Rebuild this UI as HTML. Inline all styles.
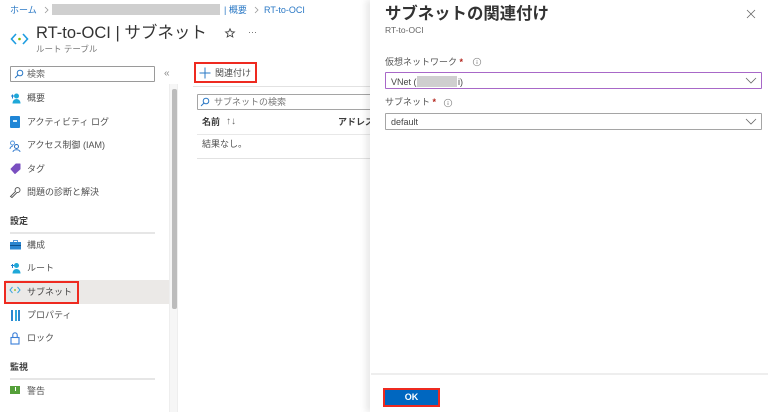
<!DOCTYPE html>
<html lang="ja"><head><meta charset="utf-8">
<style>
html,body{margin:0;padding:0;width:768px;height:412px;overflow:hidden;background:#fff}
body{position:relative;font-family:"Liberation Sans","Noto Sans CJK JP",sans-serif;color:#444;filter:blur(.35px)}
.t{position:absolute;white-space:nowrap;font-size:9px;line-height:12px;color:#505050}
.b{position:absolute;box-sizing:border-box}
svg{position:absolute;overflow:visible}
.link{color:#2a78c5}
.h{font-weight:bold;color:#3c3c3c}
</style></head><body>
<!-- breadcrumb -->
<div class="t link" style="left:10px;top:4px">ホーム</div>
<svg style="left:44px;top:6px" width="6" height="8"><path d="M1 1l3 3-3 3" fill="none" stroke="#999" stroke-width=".8"/></svg>
<div class="b" style="left:52px;top:4px;width:168px;height:11px;background:#cfcfcf"></div>
<div class="t link" style="left:224px;top:4px">| 概要</div>
<svg style="left:254px;top:6px" width="6" height="8"><path d="M1 1l3 3-3 3" fill="none" stroke="#999" stroke-width=".8"/></svg>
<div class="t link" style="left:264px;top:4px">RT-to-OCI</div>
<!-- title -->
<svg style="left:10px;top:32px" width="20" height="14"><path d="M6 2L1.500 7 6 12" fill="none" stroke="#1f9de0" stroke-width="1.600"/><path d="M13 2l4.500 5-4.500 5" fill="none" stroke="#1f9de0" stroke-width="1.600"/><circle cx="9.500" cy="7" r="1.300" fill="#7fba00"/></svg>
<div class="t" style="left:36px;top:22px;font-size:16.500px;line-height:22px;color:#333">RT-to-OCI | サブネット</div>
<div class="t" style="left:36px;top:43px;font-size:8.500px;color:#777">ルート テーブル</div>
<svg style="left:225px;top:28px" width="10" height="10"><path d="M5 .8l1.300 2.900 3.100.3-2.400 2 .8 3L5 7.400 2.200 9l.8-3-2.400-2 3.100-.3z" fill="none" stroke="#444" stroke-width=".9"/></svg>
<div class="t" style="left:248px;top:26px;font-size:9px;line-height:12px;color:#666">···</div>
<!-- sidebar search -->
<div class="b" style="left:10px;top:66px;width:145px;height:16px;border:1px solid #9a9a9a;border-radius:1px"></div>
<svg style="left:14px;top:69px" width="10" height="10"><circle cx="6" cy="4" r="2.800" fill="none" stroke="#2a78c5"/><path d="M4 6L1 9" stroke="#2a78c5"/></svg>
<div class="t" style="left:27px;top:68px;color:#666">検索</div>
<div class="t" style="left:164px;top:68px;font-size:10px;color:#888">«</div>
<!-- sidebar items -->
<svg style="left:10px;top:93px" width="13" height="11"><circle cx="6.500" cy="3" r="2.500" fill="#1fa8d8"/><path d="M2.500 10.500c0-6 8-6 8 0z" fill="#1fa8d8"/><path d="M1 3h3M2.500 1.500v4" stroke="#1f7fd0"/></svg>
<div class="t" style="left:27px;top:92px">概要</div>
<div class="b" style="left:10px;top:116px;width:10px;height:12px;background:#1f86d6;border-radius:1px"></div>
<div class="b" style="left:13px;top:120px;width:4px;height:1.500px;background:#d6eefc"></div>
<div class="t" style="left:27px;top:116px">アクティビティ ログ</div>
<svg style="left:9px;top:140px" width="12" height="13"><circle cx="3.500" cy="3" r="2" fill="none" stroke="#5a9ae0"/><circle cx="7.500" cy="6.500" r="2" fill="none" stroke="#2a6fc0"/><path d="M1 9c0-2 2-3 3-3M4 12c0-3 7-3 7 0" fill="none" stroke="#3a7fd0"/></svg>
<div class="t" style="left:27px;top:139px">アクセス制御 (IAM)</div>
<svg style="left:10px;top:163px" width="11" height="11"><path d="M1 6l5-5h4v5l-5 4.500z" fill="#7a4fc0" stroke="#7a4fc0" stroke-linejoin="round"/></svg>
<div class="t" style="left:27px;top:163px">タグ</div>
<svg style="left:9px;top:186px" width="12" height="12"><path d="M1.500 10.500l5-5a2.500 2.500 0 1 1 1.500 1l-5 5z" fill="none" stroke="#555" stroke-width=".9"/></svg>
<div class="t" style="left:27px;top:186px">問題の診断と解決</div>
<div class="t h" style="left:10px;top:215px">設定</div>
<div class="b" style="left:10px;top:232px;width:145px;height:2px;background:#e6e6e6"></div>
<svg style="left:10px;top:239px" width="11" height="11"><path d="M3.500 3V1.500h4V3" fill="none" stroke="#5a9ad8"/><rect x="0" y="3" width="11" height="7.500" fill="#2a85d0"/><rect x="0" y="6" width="11" height="1" fill="#0d4f8c"/></svg>
<div class="t" style="left:27px;top:239px">構成</div>
<svg style="left:10px;top:262px" width="13" height="12"><circle cx="6.500" cy="3.500" r="2.500" fill="#1fa8d8"/><path d="M2.500 11.500c0-6 8-6 8 0z" fill="#1fa8d8"/><path d="M1 3.500h3M2.500 2v4" stroke="#1f7fd0"/></svg>
<div class="t" style="left:27px;top:262px">ルート</div>
<div class="b" style="left:5px;top:280px;width:164px;height:24px;background:#ebe9e7"></div>
<div class="b" style="left:4px;top:281px;width:75px;height:23px;border:2px solid #ee2a20"></div>
<svg style="left:9px;top:285px" width="12" height="10"><path d="M3.500 2L1 5l2.500 3M8.500 2L11 5 8.500 8" fill="none" stroke="#3aa7e0"/><circle cx="6" cy="5" r=".9" fill="#7fba00"/></svg>
<div class="t" style="left:27px;top:286px;color:#444">サブネット</div>
<div class="b" style="left:11px;top:310px;width:2px;height:11px;background:#2a85d0"></div>
<div class="b" style="left:15px;top:310px;width:2px;height:11px;background:#32a8dc"></div>
<div class="b" style="left:18px;top:310px;width:2px;height:11px;background:#2a85d0"></div>
<div class="t" style="left:27px;top:309px">プロパティ</div>
<svg style="left:10px;top:332px" width="10" height="13"><rect x="1" y="5.500" width="8" height="6.500" fill="none" stroke="#3a7fd8" stroke-width="1.100"/><path d="M2.800 5.500V3a2.200 2.200 0 0 1 4.400 0v2.500" fill="none" stroke="#3a7fd8" stroke-width="1.100"/></svg>
<div class="t" style="left:27px;top:332px">ロック</div>
<div class="t h" style="left:10px;top:361px">監視</div>
<div class="b" style="left:10px;top:378px;width:145px;height:2px;background:#e6e6e6"></div>
<div class="b" style="left:10px;top:386px;width:10px;height:8px;background:#55a03a"></div>
<div class="b" style="left:14.500px;top:387px;width:1px;height:4px;background:#fff"></div>
<div class="t" style="left:27px;top:385px">警告</div>
<!-- scrollbar -->
<div class="b" style="left:169px;top:84px;width:9px;height:328px;background:#f6f6f6;border-left:1px solid #eee;border-right:1px solid #eee"></div>
<div class="b" style="left:172px;top:89px;width:5px;height:220px;background:#bcbcbc;border-radius:2px"></div>
<!-- main -->
<div class="b" style="left:194px;top:62px;width:63px;height:21px;border:2px solid #ee2a20"></div>
<svg style="left:199px;top:67px" width="12" height="12"><path d="M6 .5v11M.5 6h11" stroke="#2a78c5" stroke-width="1"/></svg>
<div class="t" style="left:215px;top:67px">関連付け</div>
<div class="b" style="left:193px;top:86px;width:177px;height:1px;background:#e2e2e2"></div>
<div class="b" style="left:197px;top:94px;width:180px;height:16px;border:1px solid #a5a5a5;border-radius:1px"></div>
<svg style="left:200px;top:97px" width="10" height="10"><circle cx="6" cy="4" r="2.800" fill="none" stroke="#2a78c5"/><path d="M4 6L1 9" stroke="#2a78c5"/></svg>
<div class="t" style="left:214px;top:96px;color:#777">サブネットの検索</div>
<div class="t h" style="left:202px;top:116px">名前</div>
<div class="t" style="left:226px;top:116px;font-size:10px;color:#666">↑↓</div>
<div class="t h" style="left:338px;top:116px">アドレス</div>
<div class="b" style="left:197px;top:134px;width:173px;height:1px;background:#e8e8e8"></div>
<div class="t" style="left:202px;top:138px">結果なし。</div>
<div class="b" style="left:197px;top:158px;width:173px;height:1px;background:#e2e2e2"></div>
<!-- panel -->
<div class="b" style="left:370px;top:0;width:398px;height:412px;background:#fff;box-shadow:-4px 0 6px rgba(0,0,0,.09)"></div>
<div class="t" style="left:385px;top:2px;font-size:16.400px;line-height:24px;font-weight:bold;color:#333">サブネットの関連付け</div>
<svg style="left:746px;top:9px" width="10" height="10"><path d="M1 1l8 8M9 1L1 9" stroke="#666" stroke-width=".8"/></svg>
<div class="t" style="left:385px;top:24px;font-size:8.500px;color:#666">RT-to-OCI</div>
<div class="t" style="left:385px;top:56px;color:#555">仮想ネットワーク <span style="color:#b3261e;font-weight:bold">*</span></div>
<svg style="left:472px;top:57px" width="10" height="10"><circle cx="5" cy="5" r="3.800" fill="none" stroke="#888" stroke-width=".7"/><path d="M5 4.500v2.500M5 3v.8" stroke="#777" stroke-width=".7"/></svg>
<div class="b" style="left:385px;top:72px;width:377px;height:17px;border:1px solid #a868c8;border-radius:1px"></div>
<div class="t" style="left:391px;top:76px;color:#444">VNet (</div>
<div class="b" style="left:417px;top:76px;width:40px;height:11px;background:#cfcfcf"></div>
<div class="t" style="left:458px;top:76px;color:#444">i)</div>
<svg style="left:745px;top:77px" width="12" height="7"><path d="M1 1l5 5 5-5" fill="none" stroke="#666" stroke-width=".8"/></svg>
<div class="t" style="left:385px;top:96px;color:#555">サブネット <span style="color:#b3261e;font-weight:bold">*</span></div>
<svg style="left:443px;top:98px" width="10" height="10"><circle cx="5" cy="5" r="3.800" fill="none" stroke="#888" stroke-width=".7"/><path d="M5 4.500v2.500M5 3v.8" stroke="#777" stroke-width=".7"/></svg>
<div class="b" style="left:385px;top:113px;width:377px;height:17px;border:1px solid #a5a5a5;border-radius:1px"></div>
<div class="t" style="left:391px;top:116px;color:#444">default</div>
<svg style="left:745px;top:118px" width="12" height="7"><path d="M1 1l5 5 5-5" fill="none" stroke="#666" stroke-width=".8"/></svg>
<div class="b" style="left:371px;top:373px;width:397px;height:2px;background:#eeeeee"></div>
<div class="b" style="left:383px;top:388px;width:57px;height:19px;background:#0067c0;border:2px solid #ee2a20"></div>
<div class="t" style="left:383px;top:391px;width:57px;text-align:center;color:#fff;font-weight:bold;font-size:9px">OK</div>
</body></html>
